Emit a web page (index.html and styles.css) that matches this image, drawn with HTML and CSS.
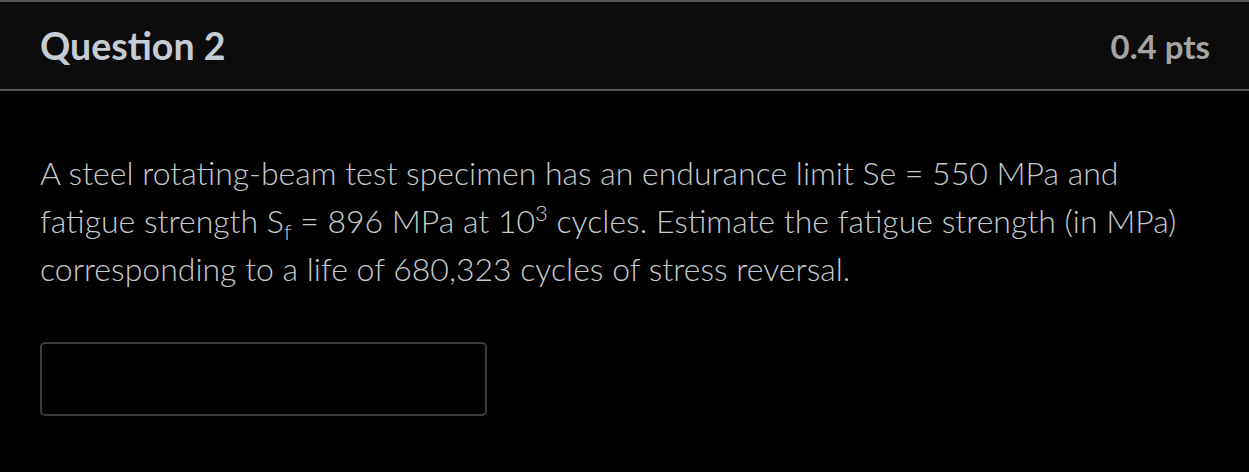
FILE: index.html
```html
<!DOCTYPE html>
<html>
<head>
<meta charset="utf-8">
<link rel="stylesheet" href="styles.css">
</head>
<body>
<div class="question">
  <div class="q-header">
    <h2 class="q-title">Question 2</h2>
    <span class="q-pts">0.4 pts</span>
  </div>
  <div class="q-body">
    <p class="q-text">A steel rotating-beam test specimen has an endurance limit Se = 550 MPa and fatigue strength S<sub>f</sub> = 896 MPa at 10<sup>3</sup> cycles. Estimate the fatigue strength (in MPa) corresponding to a life of 680,323 cycles of stress reversal.</p>
    <div class="answer-box"></div>
  </div>
</div>
</body>
</html>
```

FILE: styles.css
```css
html, body {
  margin: 0;
  padding: 0;
  background: #000;
}
body {
  font-family: Lato, "Open Sans", sans-serif;
  width: 1249px;
  height: 472px;
  overflow: hidden;
}
.q-header {
  display: flex;
  align-items: center;
  justify-content: space-between;
  height: 87px;
  padding: 0 39px 0 40px;
  background: #0c0c0c;
  border-top: 2px solid #555;
  border-bottom: 2px solid #555;
}
.q-title {
  margin: 0;
  font-size: 37.5px;
  font-weight: 700;
  color: #c5ccd4;
}
.q-pts {
  font-size: 33px;
  font-weight: 700;
  color: #a4a4a4;
}
.q-body {
  padding: 58px 40px 0 40px;
}
.q-text {
  margin: 0;
  font-family: "Lato Light", Lato, "Open Sans", sans-serif;
  font-size: 32px;
  font-weight: 300;
  line-height: 48px;
  color: #c6cacf;
  max-width: 1160px;
}
.q-text sub, .q-text sup {
  font-size: 22px;
  line-height: 0;
}
.answer-box {
  margin-top: 49px;
  width: 443px;
  height: 70px;
  border: 2px solid #3c3c3c;
  border-radius: 5px;
}
```
